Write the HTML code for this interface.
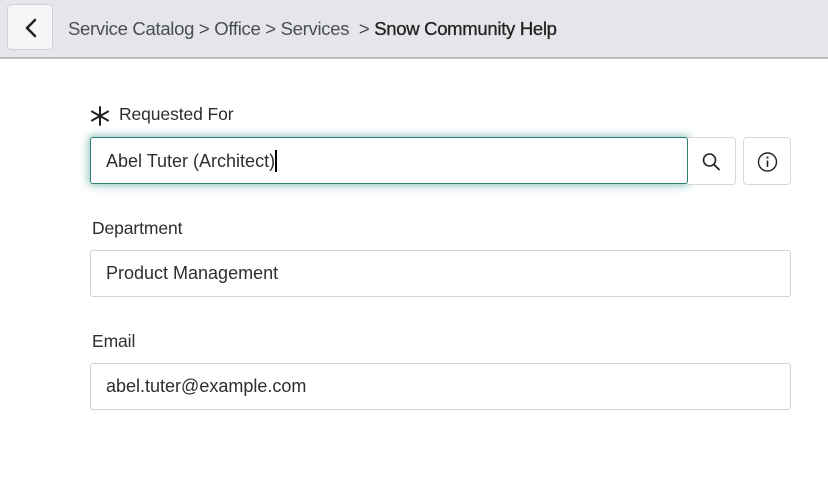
<!DOCTYPE html>
<html><head><style>
*{box-sizing:border-box;margin:0;padding:0}
body{width:828px;height:500px;background:#fff;font-family:"Liberation Sans",sans-serif;color:#2e2e2e;position:relative;overflow:hidden}
.hdr{position:absolute;left:0;top:0;width:828px;height:59px;background:#e4e6e9;border-bottom:2px solid #bcbec2}
.back{position:absolute;left:7px;top:4px;width:46px;height:46px;background:#f4f5f6;border:1px solid #d0d2d5;border-radius:4px}
.crumb{position:absolute;left:68px;top:18px;font-size:18.5px;color:#4a4d52;letter-spacing:-0.3px;white-space:nowrap}
.crumb b{color:#222;font-weight:normal;-webkit-text-stroke:0.3px #222}
.lbl{position:absolute;left:92px;font-size:17.5px;color:#2e2e2e;letter-spacing:-0.1px}
.inp{position:absolute;left:90px;width:701px;height:47px;border:1px solid #cfd1d4;border-radius:3px;font-size:18px;padding:12px 0 0 15px;letter-spacing:0}
.btn{position:absolute;top:137px;width:48px;height:48px;border:1px solid #d5d7da;border-radius:4px;background:#fff}
</style></head><body>
<div class="hdr">
 <div class="back"><svg width="46" height="46" viewBox="0 0 46 46"><path d="M27 15 L19 23 L27 31" fill="none" stroke="#222" stroke-width="2.6" stroke-linecap="round" stroke-linejoin="round"/></svg></div>
 <div class="crumb">Service Catalog &gt; Office &gt; Services &nbsp;&gt; <b>Snow Community Help</b></div>
</div>
<svg style="position:absolute;left:90px;top:106px" width="20" height="20" viewBox="0 0 20 20"><g stroke="#222" stroke-width="2" stroke-linecap="round"><path d="M10 1V19"/><path d="M2 5.5L18 14.5"/><path d="M2 14.5L18 5.5"/></g></svg>
<div class="lbl" style="left:119px;top:104px">Requested For</div>
<div class="inp" style="top:137px;width:598px;border:1px solid #2e7f74;box-shadow:0 0 8px 2px rgba(46,150,135,0.5)">Abel Tuter (Architect)<span style="display:inline-block;width:1.5px;height:22px;background:#000;vertical-align:-5px"></span></div>
<div class="btn" style="left:688px;border-left:none;border-radius:0 4px 4px 0"><svg width="48" height="46" viewBox="0 0 48 46"><circle cx="21.5" cy="22" r="6" fill="none" stroke="#222" stroke-width="1.6"/><path d="M26 26.5L31 31.5" stroke="#222" stroke-width="1.8" stroke-linecap="round"/></svg></div>
<div class="btn" style="left:743px"><svg width="46" height="46" viewBox="0 0 46 46"><circle cx="23.5" cy="24" r="9" fill="none" stroke="#222" stroke-width="1.4"/><circle cx="23.5" cy="19.5" r="1.1" fill="#222"/><path d="M23.5 22.5V29" stroke="#222" stroke-width="1.6"/></svg></div>
<div class="lbl" style="top:218px">Department</div>
<div class="inp" style="top:250px">Product Management</div>
<div class="lbl" style="top:331px">Email</div>
<div class="inp" style="top:363px">abel.tuter@example.com</div>
</body></html>
